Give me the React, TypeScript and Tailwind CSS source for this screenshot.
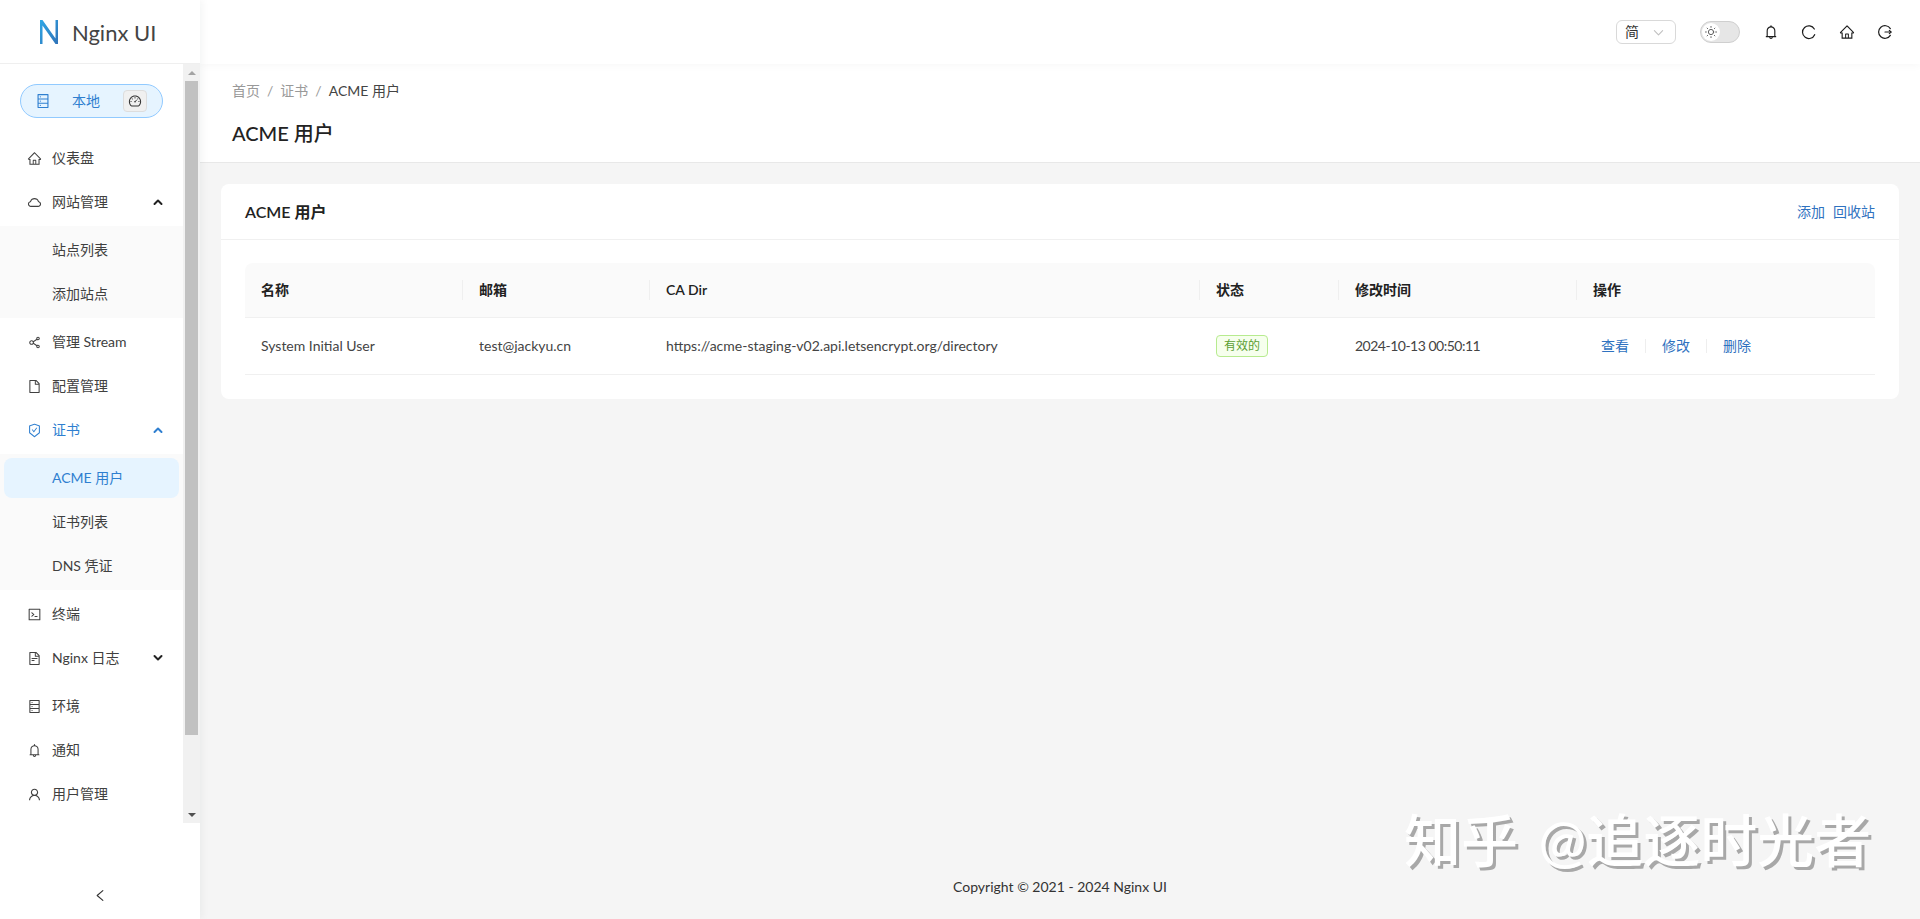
import React from "react";
import {
  AiOutlineHome,
  AiOutlineCloud,
  AiOutlineShareAlt,
  AiOutlineFile,
  AiOutlineSafetyCertificate,
  AiOutlineCode,
  AiOutlineFileText,
  AiOutlineDatabase,
  AiOutlineBell,
  AiOutlineUser,
  AiOutlineDashboard,
} from "react-icons/ai";

const font = "font-['Lato','Noto_Sans_CJK_SC',sans-serif]";

type IconProps = { className?: string };
const S = ({ children, className, size = 16 }: { children: React.ReactNode; className?: string; size?: number }) => (
  <svg viewBox="0 0 24 24" width={size} height={size} fill="none" stroke="currentColor" strokeWidth={1.8} strokeLinecap="round" strokeLinejoin="round" className={className}>
    {children}
  </svg>
);

const ChevUp = ({ className }: IconProps) => (
  <svg viewBox="0 0 12 12" width={12} height={12} fill="none" stroke="currentColor" strokeWidth={2} strokeLinecap="round" strokeLinejoin="round" className={className}>
    <path d="m2.500 8 3.500-3.500L9.500 8" />
  </svg>
);
const ChevDown = ({ className }: IconProps) => (
  <svg viewBox="0 0 12 12" width={12} height={12} fill="none" stroke="currentColor" strokeWidth={2} strokeLinecap="round" strokeLinejoin="round" className={className}>
    <path d="m2.500 4 3.500 3.500L9.500 4" />
  </svg>
);

const Item = ({ icon, label, blue, arrow, extra }: { icon?: React.ReactNode; label: string; blue?: boolean; arrow?: "up" | "down"; extra?: boolean }) => (
  <div className={`h-10 shrink-0 flex items-center pl-[27px] pr-[19px] text-sm ${extra ? "mb-1" : ""} ${blue ? "text-[#2f7fd0]" : "text-[#404040]"}`}>
    <span className="w-[15px] flex items-center justify-center shrink-0 text-[15px]">{icon}</span>
    <span className="ml-[10px] flex-1 whitespace-nowrap">{label}</span>
    {arrow === "up" && <ChevUp className={blue ? "text-[#2f7fd0]" : "text-[#222222]"} />}
    {arrow === "down" && <ChevDown className="text-[#222222]" />}
  </div>
);

const Sub = ({ label, active }: { label: string; active?: boolean }) => (
  <div className={`mx-1 h-10 shrink-0 flex items-center pl-[48px] text-sm rounded-lg whitespace-nowrap ${active ? "bg-[#e6f4ff] text-[#2f7fd0]" : "text-[#404040]"}`}>{label}</div>
);

const Scrollbar = () => (
  <div className="w-[17px] shrink-0 bg-[#f1f1f1] flex flex-col items-center">
    <div className="h-[17px] w-full flex items-center justify-center">
      <div className="w-0 h-0 border-x-[4px] border-x-transparent border-b-[4px] border-b-[#a3a3a3]" />
    </div>
    <div className="w-[13px] h-[654px] bg-[#c1c1c1]" />
    <div className="flex-1" />
    <div className="h-[17px] w-full flex items-center justify-center">
      <div className="w-0 h-0 border-x-[4px] border-x-transparent border-t-[4px] border-t-[#505050]" />
    </div>
  </div>
);

const Sidebar = () => (
  <aside className="w-[200px] shrink-0 h-full bg-white flex flex-col relative z-20 shadow-[2px_0_8px_rgba(29,35,41,0.05)]">
    <div className="h-16 shrink-0 flex items-center pl-10 border-b border-[#efefef]">
      <svg width="18" height="24" viewBox="0 0 18 24">
        <defs>
          <linearGradient id="lg" x1="0" y1="0" x2="1" y2="1">
            <stop offset="0" stopColor="#2fa8e6" />
            <stop offset="1" stopColor="#2f72b8" />
          </linearGradient>
        </defs>
        <path d="M0 24V0h2.500L15.500 18.500V0H18v24h-2.500L2.500 5.500V24Z" fill="url(#lg)" />
      </svg>
      <span className="ml-[14px] mt-[2px] text-[22px] leading-none text-[#444444] whitespace-nowrap">Nginx UI</span>
    </div>
    <div className="h-[759px] shrink-0 flex">
      <div className="flex-1 min-w-0">
        <div className="mx-5 mt-5 h-[34px] w-[143px] rounded-full border border-[#91caff] bg-[#e6f4ff] flex items-center pl-[14px] pr-[16px] text-sm text-[#2f7fd0]">
          <AiOutlineDatabase size={16} className="shrink-0" />
          <span className="ml-[21px] flex-1 whitespace-nowrap">本地</span>
          <span className="w-6 h-[22px] border border-[#dddddd] bg-[#f0f0f0] rounded flex items-center justify-center text-[#333333] -mr-[1px]">
            <AiOutlineDashboard size={14} />
          </span>
        </div>
        <div className="mt-5 flex flex-col gap-1">
          <Item icon={<AiOutlineHome />} label="仪表盘" />
          <Item icon={<AiOutlineCloud />} label="网站管理" arrow="up" />
          <div className="bg-[#fafafa] py-1 flex flex-col gap-1">
            <Sub label="站点列表" />
            <Sub label="添加站点" />
          </div>
          <Item icon={<AiOutlineShareAlt />} label="管理 Stream" />
          <Item icon={<AiOutlineFile />} label="配置管理" />
          <Item icon={<AiOutlineSafetyCertificate />} label="证书" blue arrow="up" />
          <div className="bg-[#fafafa] py-1 flex flex-col gap-1">
            <Sub label="ACME 用户" active />
            <Sub label="证书列表" />
            <Sub label="DNS 凭证" />
          </div>
          <Item icon={<AiOutlineCode />} label="终端" />
          <Item icon={<AiOutlineFileText />} label="Nginx 日志" arrow="down" extra />
          <Item icon={<AiOutlineDatabase />} label="环境" />
          <Item icon={<AiOutlineBell />} label="通知" />
          <Item icon={<AiOutlineUser />} label="用户管理" />
        </div>
      </div>
      <Scrollbar />
    </div>
    <div className="flex-1 flex items-center justify-center text-[#333333] pt-[48px]">
      <svg viewBox="0 0 12 16" width="10" height="13" fill="none" stroke="currentColor" strokeWidth="1.400" strokeLinecap="round" strokeLinejoin="round">
        <path d="M9.500 2 2.500 8l7 6" />
      </svg>
    </div>
  </aside>
);

const TopBar = () => (
  <header className="h-16 shrink-0 bg-white flex items-center justify-end shadow-[0_2px_8px_rgba(0,0,0,0.03)] relative z-10">
    <div className="w-[60px] h-6 border border-[#d9d9d9] rounded-md flex items-center pl-2 pr-[11px] text-sm text-[#333333]">
      <span className="flex-1">简</span>
      <svg viewBox="0 0 12 12" width="11" height="11" fill="none" stroke="#c0c0c0" strokeWidth="1.200" strokeLinecap="round" strokeLinejoin="round">
        <path d="m1.500 4 4.500 4.500L10.500 4" />
      </svg>
    </div>
    <div className="ml-6 w-10 h-[22px] rounded-full bg-[#e6e6e6] border border-[#cfcfcf] flex items-center p-[1px]">
      <span className="w-[18px] h-[18px] rounded-full bg-white flex items-center justify-center text-[#555555]">
        <svg viewBox="0 0 24 24" width="14" height="14" fill="none" stroke="currentColor" strokeWidth="1.600" strokeLinecap="round">
          <circle cx="12" cy="12" r="4.500" />
          <path d="M12 2.500v1.500M12 20v1.500M2.500 12H4M20 12h1.500M5.300 5.300l1 1M17.700 17.700l1 1M5.300 18.700l1-1M17.700 6.300l1-1" />
        </svg>
      </span>
    </div>
    <div className="ml-[23px] mr-[27px] flex items-center gap-[22px] text-[#1c1c1c]">
      <AiOutlineBell size={16} />
      <S>
        <path d="M20 7.500A9.500 9.500 0 1 0 20.500 16" />
      </S>
      <AiOutlineHome size={16} />
      <S>
        <path d="M20 7A9.500 9.500 0 1 0 20 17" />
        <path d="M12 12h9" />
        <path d="M18.500 9.500 21 12l-2.500 2.500" />
      </S>
    </div>
  </header>
);

const PageHeader = () => (
  <div className="h-[99px] shrink-0 bg-white border-b border-[#e8e8e8] pl-8 pt-[17px]">
    <div className="h-5 flex items-center text-sm text-[#999999] whitespace-nowrap">
      <span>首页</span>
      <span className="mx-[7px]">/</span>
      <span>证书</span>
      <span className="mx-[7px]">/</span>
      <span className="text-[#444444]">ACME 用户</span>
    </div>
    <div className="mt-[18px] text-xl leading-7 font-medium text-[#222222] whitespace-nowrap">ACME 用户</div>
  </div>
);

const cols = [218, 187, 550, 139, 238, 298];
const headers = ["名称", "邮箱", "CA Dir", "状态", "修改时间", "操作"];

const Table = () => (
  <table className="w-full table-fixed border-collapse text-sm">
    <colgroup>
      {cols.map((c, i) => (
        <col key={i} width={c} />
      ))}
    </colgroup>
    <thead>
      <tr className="h-[54px] bg-[#fafafa]">
        {headers.map((h, i) => (
          <th
            key={h}
            className={`relative px-4 text-left font-semibold text-[#222222] border-b border-[#f0f0f0] ${i === 0 ? "rounded-tl-lg" : ""} ${i === 5 ? "rounded-tr-lg" : ""}`}
          >
            {h}
            {i < 5 && <span className="absolute right-0 top-[17px] h-[20px] w-px bg-[#efefef]" />}
          </th>
        ))}
      </tr>
    </thead>
    <tbody>
      <tr className="h-[57px] text-[#444444]">
        <td className="px-4 border-b border-[#f0f0f0]">System Initial User</td>
        <td className="px-4 border-b border-[#f0f0f0]">test@jackyu.cn</td>
        <td className="px-4 border-b border-[#f0f0f0] whitespace-nowrap">https://acme-staging-v02.api.letsencrypt.org/directory</td>
        <td className="px-4 border-b border-[#f0f0f0]">
          <span className="inline-flex items-center justify-center h-[22px] w-[52px] text-xs rounded border border-[#b7eb8f] bg-[#f6ffed] text-[#5a9e32]">有效的</span>
        </td>
        <td className="px-4 border-b border-[#f0f0f0] whitespace-nowrap tracking-[-0.5px]">2024-10-13 00:50:11</td>
        <td className="px-4 border-b border-[#f0f0f0]">
          <div className="flex items-center pl-[8px] text-[#2f72c0] whitespace-nowrap">
            <span>查看</span>
            <span className="mx-4 h-[14px] w-px bg-[#eeeeee]" />
            <span>修改</span>
            <span className="mx-4 h-[14px] w-px bg-[#eeeeee]" />
            <span>删除</span>
          </div>
        </td>
      </tr>
    </tbody>
  </table>
);

export default function App() {
  return (
    <div className={`${font} w-[1920px] h-[919px] flex overflow-hidden bg-[#f5f5f5] relative`}>
      <Sidebar />
      <main className="flex-1 min-w-0 h-full flex flex-col">
        <TopBar />
        <PageHeader />
        <div className="flex-1 px-[21px] pt-[21px]">
          <section className="bg-white rounded-lg h-[215px]">
            <div className="h-[56px] border-b border-[#f0f0f0] pl-6 pr-6 flex items-center justify-between">
              <span className="text-base font-semibold text-[#222222] whitespace-nowrap">ACME 用户</span>
              <span className="flex gap-2 text-sm text-[#2f72c0] whitespace-nowrap">
                <span>添加</span>
                <span>回收站</span>
              </span>
            </div>
            <div className="p-6 pt-[23px]">
              <Table />
            </div>
          </section>
        </div>
        <footer className="h-[64px] shrink-0 pt-[22px] text-center text-sm text-[#333333]">Copyright © 2021 - 2024 Nginx UI</footer>
      </main>
      <div className="absolute left-[1404px] top-[808px] text-[57px] leading-[64px] font-medium text-white [text-shadow:3px_3px_0_#a8a8a8] [word-spacing:6px] whitespace-nowrap z-30">知乎 @追逐时光者</div>
    </div>
  );
}
